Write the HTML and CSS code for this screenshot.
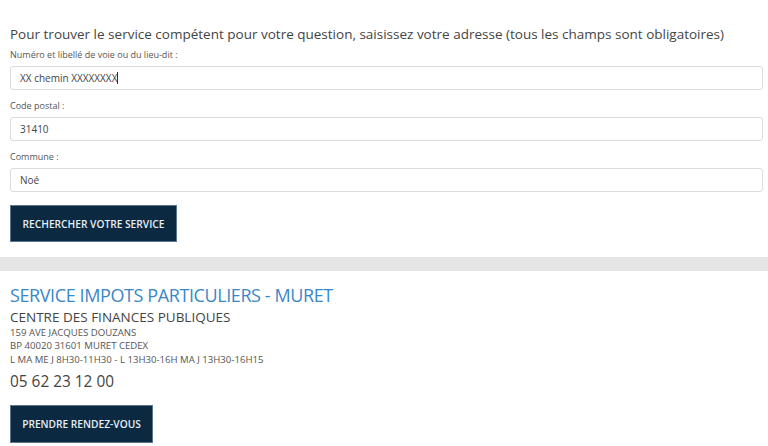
FILE: index.html
```html
<!DOCTYPE html>
<html lang="fr">
<head>
<meta charset="utf-8">
<title>Trouver votre service</title>
<link rel="stylesheet" href="styles.css">
</head>
<body>
<div class="page">
  <form class="search">
    <p class="intro">Pour trouver le service compétent pour votre question, saisissez votre adresse (tous les champs sont obligatoires)</p>
    <div class="group">
      <label class="label">Numéro et libellé de voie ou du lieu-dit :</label>
      <div class="input">XX chemin XXXXXXXX<span class="caret"></span></div>
    </div>
    <div class="group">
      <label class="label">Code postal :</label>
      <div class="input">31410</div>
    </div>
    <div class="group">
      <label class="label">Commune :</label>
      <div class="input">Noé</div>
    </div>
    <div class="btn btn-search">RECHERCHER VOTRE SERVICE</div>
  </form>
</div>
<div class="band"></div>
<div class="page">
  <section class="result">
    <h2 class="title">SERVICE IMPOTS PARTICULIERS - MURET</h2>
    <div class="org">CENTRE DES FINANCES PUBLIQUES</div>
    <div class="addr">
      <div>159 AVE JACQUES DOUZANS</div>
      <div>BP 40020 31601 MURET CEDEX</div>
      <div>L MA ME J 8H30-11H30 - L 13H30-16H MA J 13H30-16H15</div>
    </div>
    <div class="phone">05 62 23 12 00</div>
    <div class="btn btn-rdv">PRENDRE RENDEZ-VOUS</div>
  </section>
</div>
</body>
</html>
```

FILE: styles.css
```css
html, body {
  margin: 0;
  padding: 0;
  background: #ffffff;
}
body {
  font-family: "Open Sans", "Liberation Sans", sans-serif;
  color: #444444;
}
.page {
  padding: 0 5px 0 10px;
}
.search {
  display: flex;
  flex-direction: column;
  align-items: flex-start;
  padding-top: 24px;
}
.intro {
  margin: 0;
  font-size: 13.5px;
  line-height: 20px;
  color: #444444;
}
.group {
  display: flex;
  flex-direction: column;
  width: 100%;
  margin-top: 8px;
}
.group:first-of-type {
  margin-top: 3px;
}
.label {
  font-size: 9px;
  line-height: 16px;
  margin-bottom: 3px;
  color: #555555;
}
.input {
  box-sizing: border-box;
  height: 24px;
  border: 1px solid #dcdcdc;
  border-radius: 3px;
  padding: 0 9px;
  font-size: 10px;
  line-height: 22px;
  color: #444444;
  display: flex;
  align-items: center;
}
.caret {
  display: inline-block;
  width: 1px;
  height: 12px;
  background: #333333;
}
.btn {
  box-sizing: border-box;
  background: #0b2a42;
  color: #e8eef4;
  font-size: 10.2px;
  font-weight: 600;
  display: flex;
  align-items: center;
  justify-content: center;
  border: 1px solid #5d7690;
}
.btn-search {
  margin-top: 13px;
  width: 167px;
  height: 37px;
}
.band {
  height: 14px;
  background: #e5e5e5;
  margin-top: 15px;
}
.result {
  display: flex;
  flex-direction: column;
  align-items: flex-start;
  padding-top: 12px;
}
.title {
  margin: 0;
  font-size: 18px;
  letter-spacing: -0.4px;
  line-height: 24px;
  font-weight: 400;
  color: #3b87c6;
}
.org {
  font-size: 13.5px;
  line-height: 18px;
  margin-top: 1px;
  color: #444444;
}
.addr {
  font-size: 9.6px;
  line-height: 13.4px;
  color: #555555;
}
.phone {
  font-size: 15.4px;
  line-height: 20px;
  margin-top: 6px;
  color: #444444;
}
.btn-rdv {
  margin-top: 13px;
  width: 143px;
  height: 38px;
}
```
